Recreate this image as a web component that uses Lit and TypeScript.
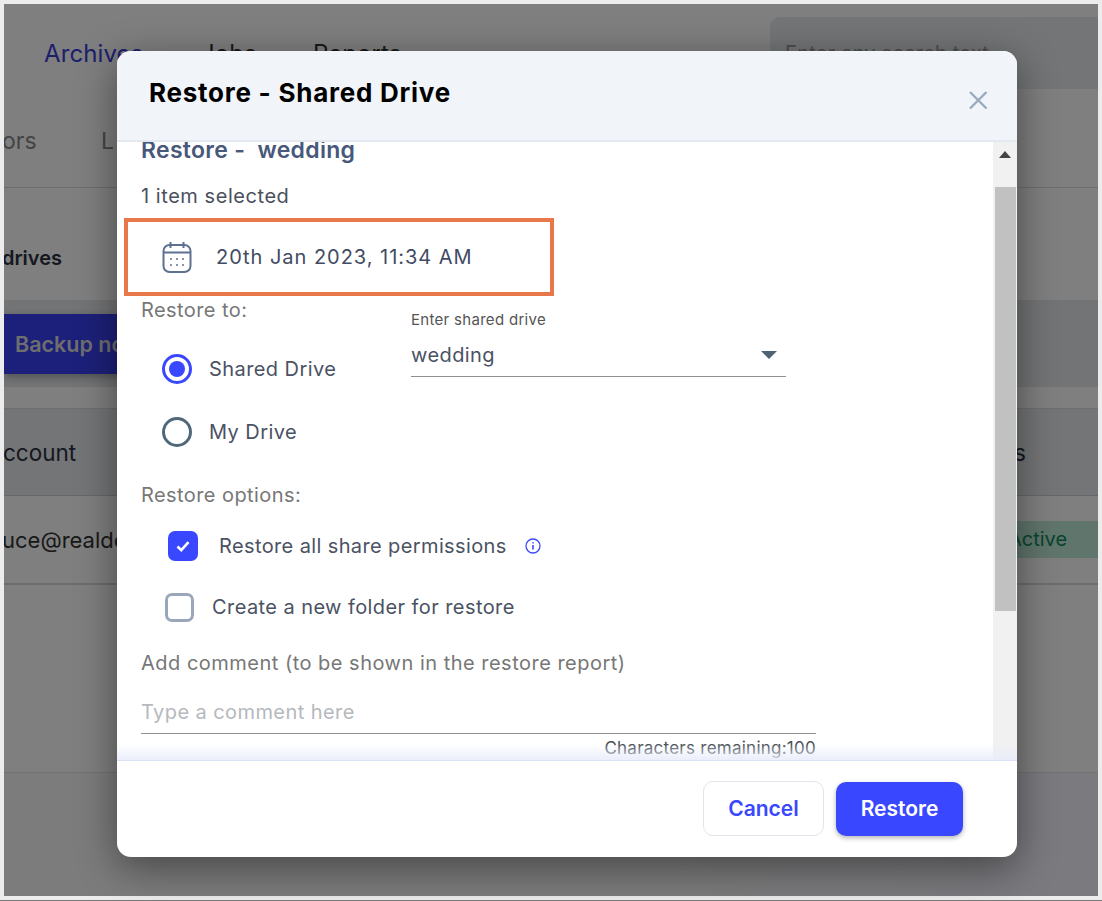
import { LitElement, html, css } from 'lit';
import { customElement } from 'lit/decorators.js';

@customElement('app-root')
export class AppRoot extends LitElement {
  static styles = css`
    :host {
      display: block;
      position: relative;
      box-sizing: border-box;
      width: 1102px;
      height: 901px;
      padding: 4px 4px 0;
      background: #ececec;
      border-bottom: 1px solid #777;
      font-family: Inter, 'Liberation Sans', sans-serif;
      overflow: hidden;
    }
    .page {
      position: relative;
      height: 892px;
      background: #fff;
      overflow: hidden;
      display: flex;
      flex-direction: column;
      color: #333;
    }
    .nav {
      height: 85px;
      flex: none;
      display: flex;
      align-items: flex-start;
      padding-left: 40px;
      font-size: 24px;
      letter-spacing: 0.1px;
      color: #333;
    }
    .nav a {
      margin-top: 36px;
      line-height: 28px;
    }
    .nav a.active {
      color: #3a3fd8;
      width: 157px;
    }
    .nav a.jobs {
      width: 112px;
    }
    .search {
      margin: 13px 0 0 auto;
      width: 328px;
      height: 72px;
      box-sizing: border-box;
      padding: 24px 15px;
      background: #e9ebee;
      border-radius: 10px 0 0 0;
      font-size: 20px;
      letter-spacing: 0.2px;
      line-height: 24px;
      color: #999;
    }
    .tabs {
      height: 99px;
      flex: none;
      box-sizing: border-box;
      border-bottom: 1px solid #ddd;
      display: flex;
      padding-top: 36px;
      font-size: 23px;
      line-height: 32px;
      color: #888;
    }
    .tabs span:first-child {
      width: 99px;
      margin-left: -2px;
    }
    .drives {
      height: 112px;
      flex: none;
      box-sizing: border-box;
      margin-left: -2px;
      padding-top: 57px;
      font-size: 20px;
      font-weight: 600;
      line-height: 26px;
      color: #2a3040;
    }
    .band {
      height: 87px;
      flex: none;
      box-sizing: border-box;
      padding-top: 14px;
      background: #e6e8ea;
    }
    .backup {
      width: 400px;
      height: 60px;
      box-sizing: border-box;
      padding-left: 11px;
      background: #3a40f5;
      color: #ddd;
      font-size: 21.500px;
      font-weight: 600;
      line-height: 60px;
      box-shadow: 0 3px 8px rgba(0, 0, 0, 0.3);
    }
    .gap {
      height: 22px;
      flex: none;
      box-sizing: border-box;
      border-bottom: 1px solid #ddd;
    }
    .thead {
      height: 87px;
      flex: none;
      box-sizing: border-box;
      display: flex;
      justify-content: space-between;
      align-items: center;
      background: #e9ebee;
      border-bottom: 1px solid #c9d0dc;
      font-size: 22.500px;
      color: #2a3040;
    }
    .thead span:first-child {
      margin-left: -1px;
    }
    .thead span:last-child {
      margin-right: 72px;
    }
    .trow {
      height: 89px;
      flex: none;
      box-sizing: border-box;
      display: flex;
      justify-content: space-between;
      align-items: center;
      border-bottom: 2px solid #d8d8d8;
      font-size: 22px;
      color: #333;
    }
    .trow .mail {
      margin-left: -2px;
    }
    .badge {
      width: 90px;
      height: 37px;
      box-sizing: border-box;
      background: #c0ebd8;
      color: #0f8a5f;
      font-size: 20px;
      line-height: 37px;
    }
    .tail {
      flex: 1;
      margin-top: 187px;
      border-top: 1px solid #e4e4e4;
      background: linear-gradient(90deg, #f8f8f8 60%, #f4f4ff);
    }
    .veil {
      position: absolute;
      inset: 0;
      background: rgba(0, 0, 0, 0.5);
    }
    .modal {
      position: absolute;
      left: 117px;
      top: 51px;
      width: 900px;
      height: 806px;
      background: #fff;
      border-radius: 14px;
      box-shadow: 0 10px 40px rgba(0, 0, 0, 0.45);
      display: flex;
      flex-direction: column;
      overflow: hidden;
    }
    .head {
      height: 91px;
      flex: none;
      box-sizing: border-box;
      display: flex;
      align-items: center;
      justify-content: space-between;
      padding: 0 28px 0 32px;
      background: #f1f4f9;
      border-bottom: 2px solid #e4e8ef;
    }
    .title {
      font-size: 26px;
      font-weight: 700;
      letter-spacing: 0.75px;
      color: #000;
      margin-top: -6px;
    }
    .close {
      width: 22px;
      height: 22px;
      margin-top: 8px;
    }
    .middle {
      position: relative;
      height: 618px;
      flex: none;
      display: flex;
    }
    .scroll {
      flex: 1;
      overflow: hidden;
      padding-left: 24px;
      color: #4a5264;
      font-size: 20px;
      letter-spacing: 0.42px;
      line-height: 24px;
    }
    .heading {
      height: 16px;
      line-height: 16px;
      font-size: 23px;
      font-weight: 600;
      letter-spacing: 0.3px;
      color: #47587a;
      white-space: pre;
    }
    .count {
      margin-top: 26px;
      letter-spacing: 0.55px;
      color: #4a4f5c;
    }
    .when {
      margin: 10px 0 0 -17px;
      width: 430px;
      height: 78px;
      box-sizing: border-box;
      border: 4px solid #e8784a;
      display: flex;
      align-items: center;
      padding-left: 34px;
      gap: 24px;
      font-size: 20px;
      letter-spacing: 0.97px;
      color: #424b63;
    }
    .target {
      margin-top: 2px;
      display: grid;
      grid-template-columns: 270px 375px;
    }
    .caption {
      color: #777;
    }
    .radio {
      display: flex;
      align-items: center;
      height: 40px;
      margin-left: 21px;
      gap: 17px;
    }
    .radio.first {
      margin-top: 27px;
    }
    .radio.second {
      margin-top: 23px;
    }
    .dot {
      width: 30px;
      height: 30px;
      box-sizing: border-box;
      border-radius: 50%;
      border: 3px solid #50697a;
      display: flex;
      align-items: center;
      justify-content: center;
    }
    .dot.on {
      border-color: #3947ff;
    }
    .dot.on::after {
      content: '';
      width: 16px;
      height: 16px;
      border-radius: 50%;
      background: #3947ff;
    }
    .field {
      padding-top: 12px;
    }
    .field label {
      display: block;
      font-size: 15px;
      letter-spacing: 0.3px;
      line-height: 20px;
      color: #555;
    }
    .select {
      margin-top: 11px;
      padding-bottom: 7px;
      border-bottom: 1px solid #909090;
      display: flex;
      align-items: center;
      justify-content: space-between;
      line-height: 28px;
      color: #4a5264;
    }
    .select svg {
      margin-right: 9px;
    }
    .options {
      margin-top: 31px;
    }
    .check {
      display: flex;
      align-items: center;
      height: 30px;
    }
    .check.one {
      margin-top: 24px;
      padding-left: 27px;
      gap: 21px;
      letter-spacing: 0.38px;
    }
    .check.two {
      margin-top: 31px;
      padding-left: 24px;
      gap: 18px;
    }
    .box {
      box-sizing: border-box;
      display: flex;
      align-items: center;
      justify-content: center;
      flex: none;
    }
    .box.on {
      width: 30px;
      height: 30px;
      border-radius: 7px;
      background: #3947ff;
    }
    .box.off {
      width: 29px;
      height: 29px;
      border-radius: 7px;
      border: 3px solid #9aa7bb;
    }
    .info {
      margin-left: -3px;
    }
    .comment {
      margin-top: 29px;
      letter-spacing: 0.49px;
    }
    .input {
      margin-top: 25px;
      width: 675px;
      padding-bottom: 9px;
      border-bottom: 1px solid #909090;
      color: #b5b9bd;
    }
    .remain {
      margin-top: 4px;
      width: 675px;
      text-align: right;
      font-size: 17px;
      letter-spacing: 0.25px;
      line-height: 20px;
      color: #4a4f55;
    }
    .bar {
      width: 24px;
      flex: none;
      background: #f1f1f1;
      display: flex;
      flex-direction: column;
      align-items: center;
    }
    .bar svg {
      margin-top: 9px;
    }
    .thumb {
      margin-top: 29px;
      width: 21px;
      height: 424px;
      background: #c1c1c1;
    }
    .fade {
      position: absolute;
      left: 0;
      right: 0;
      bottom: 0;
      height: 16px;
      background: linear-gradient(rgba(238, 241, 252, 0), rgba(233, 237, 251, 0.9));
    }
    .foot {
      flex: 1;
      box-sizing: border-box;
      border-top: 1px solid #dbe2f5;
      display: flex;
      justify-content: flex-end;
      align-items: flex-start;
      padding: 20px 54px 0 0;
      gap: 12px;
    }
    button {
      font-family: inherit;
      font-size: 21px;
      border-radius: 10px;
      cursor: pointer;
    }
    .cancel {
      width: 121px;
      height: 55px;
      background: #fff;
      border: 1px solid #e3e3ec;
      color: #3947ff;
      font-weight: 600;
    }
    .restore {
      width: 127px;
      height: 54px;
      margin-top: 1px;
      padding-bottom: 2px;
      background: #3947ff;
      border: none;
      color: #fff;
      font-weight: 600;
      box-shadow: 0 2px 5px rgba(0, 0, 0, 0.3);
    }
  `;

  render() {
    return html`
      <div class="page">
        <div class="nav">
          <a class="active">Archives</a>
          <a class="jobs">Jobs</a>
          <a>Reports</a>
          <div class="search">Enter any search text</div>
        </div>
        <div class="tabs"><span>ors</span><span>L</span></div>
        <div class="drives">drives</div>
        <div class="band"><div class="backup">Backup now</div></div>
        <div class="gap"></div>
        <div class="thead"><span>ccount</span><span>s</span></div>
        <div class="trow">
          <span class="mail">uce@realdeal.com</span>
          <span class="badge">Active</span>
        </div>
        <div class="tail"></div>
        <div class="veil"></div>
      </div>
      <div class="modal">
        <div class="head">
          <div class="title">Restore - Shared Drive</div>
          <svg class="close" viewBox="0 0 22 22" fill="none" stroke="#9aa9bd" stroke-width="2.4">
            <path d="M3 3l16.500 16.500M19.500 3L3 19.500" />
          </svg>
        </div>
        <div class="middle">
          <div class="scroll">
            <div class="heading">Restore -  wedding</div>
            <div class="count">1 item selected</div>
            <div class="when">
              <svg width="30" height="32" viewBox="0 0 30 32" fill="none" stroke="#5f7191" stroke-width="2">
                <rect x="1.500" y="4" width="27" height="27" rx="6" />
                <path d="M2 11.500h26M8.500 1v6M21.500 1v6" />
                <g fill="#5f7191" stroke="none">
                  <circle cx="9" cy="18" r="1" />
                  <circle cx="15" cy="18" r="1" />
                  <circle cx="21" cy="18" r="1" />
                  <circle cx="9" cy="24" r="1" />
                  <circle cx="15" cy="24" r="1" />
                  <circle cx="21" cy="24" r="1" />
                </g>
              </svg>
              <span>20th Jan 2023, 11:34 AM</span>
            </div>
            <div class="target">
              <div>
                <div class="caption">Restore to:</div>
                <div class="radio first"><span class="dot on"></span><span>Shared Drive</span></div>
                <div class="radio second"><span class="dot"></span><span>My Drive</span></div>
              </div>
              <div class="field">
                <label>Enter shared drive</label>
                <div class="select">
                  <span>wedding</span>
                  <svg width="16" height="8" viewBox="0 0 16 8"><path d="M0 0h16L8 8z" fill="#4f6372" /></svg>
                </div>
              </div>
            </div>
            <div class="caption options">Restore options:</div>
            <div class="check one">
              <span class="box on">
                <svg width="16" height="14" viewBox="0 0 16 14" fill="none" stroke="#fff" stroke-width="2.600">
                  <path d="M2.500 7.500l3.800 3.700 7.200-8" />
                </svg>
              </span>
              <span>Restore all share permissions</span>
              <svg class="info" width="16" height="16" viewBox="0 0 16 16" fill="none" stroke="#3947ff" stroke-width="1.300">
                <circle cx="8" cy="8" r="7" />
                <path d="M8 7v4.500M8 4.200v1.300" stroke-width="1.600" />
              </svg>
            </div>
            <div class="check two">
              <span class="box off"></span>
              <span>Create a new folder for restore</span>
            </div>
            <div class="caption comment">Add comment (to be shown in the restore report)</div>
            <div class="input">Type a comment here</div>
            <div class="remain">Characters remaining:100</div>
          </div>
          <div class="bar">
            <svg width="12" height="7" viewBox="0 0 12 7"><path d="M6 0l6 7H0z" fill="#444" /></svg>
            <div class="thumb"></div>
          </div>
          <div class="fade"></div>
        </div>
        <div class="foot">
          <button class="cancel">Cancel</button>
          <button class="restore">Restore</button>
        </div>
      </div>
    `;
  }
}
